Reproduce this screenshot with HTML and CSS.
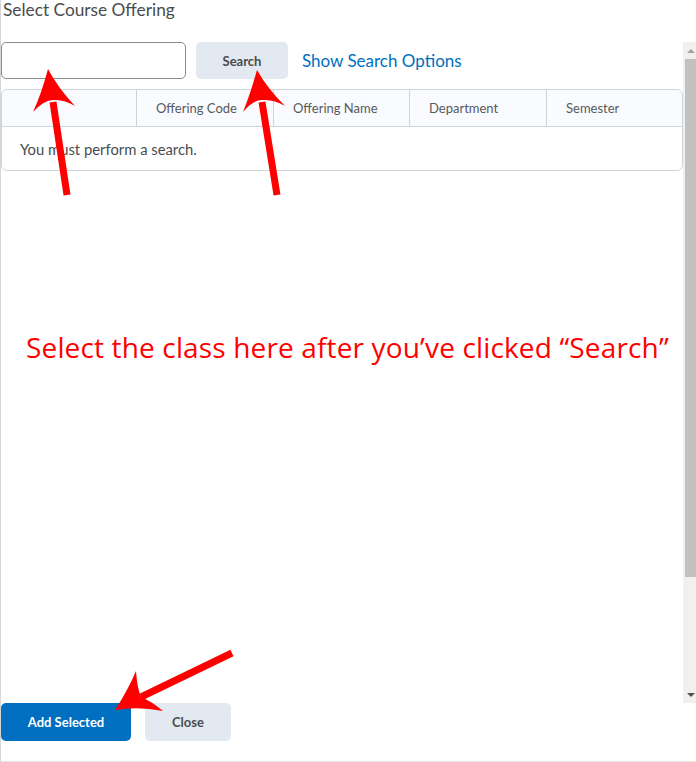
FILE: index.html
```html
<!DOCTYPE html>
<html lang="en">

<head>
    <meta charset="UTF-8">
    <meta name="viewport" content="width=device-width, initial-scale=1.0">
    <title>Select Course Offering</title>
    <link rel="stylesheet" href="styles.css">
</head>

<body>
    <div class="dialog">
        <h1 class="dialog-title">Select Course Offering</h1>

        <div class="dialog-body">
            <div class="dialog-content">
                <!-- Search bar -->
                <div class="search-row">
                    <input type="text" class="search-input" aria-label="Search">
                    <button class="btn btn-secondary btn-search">Search</button>
                    <a href="#" class="search-options">Show Search Options</a>
                </div>

                <!-- Results -->
                <table class="results">
                    <thead>
                        <tr>
                            <th class="col-select"></th>
                            <th class="col-code">Offering Code</th>
                            <th class="col-name">Offering Name</th>
                            <th class="col-dept">Department</th>
                            <th class="col-term">Semester</th>
                        </tr>
                    </thead>
                    <tbody>
                        <tr>
                            <td colspan="5">You must perform a search.</td>
                        </tr>
                    </tbody>
                </table>
            </div>

            <div class="scrollbar">
                <span class="scroll-arrow up"></span>
                <span class="scroll-thumb"></span>
                <span class="scroll-arrow down"></span>
            </div>
        </div>

        <div class="dialog-footer">
            <button class="btn btn-primary">Add Selected</button>
            <button class="btn btn-secondary btn-close">Close</button>
        </div>

        <!-- Annotations drawn over the screenshot -->
        <p class="note">Select the class here after you’ve clicked “Search”</p>
        <svg class="arrows" width="696" height="762" viewBox="0 0 696 762">
            <g fill="#ff0000" stroke="#ff0000">
                <line x1="67" y1="195" x2="53" y2="102" stroke-width="7" />
                <path stroke="none" d="M48,69 Q41,95 33,112 Q44,100 53,100 Q64,99 75,106 Q58,88 48,69 Z" />

                <line x1="277" y1="195" x2="262" y2="102" stroke-width="7" />
                <path stroke="none" d="M257,70 Q250,95 243,112 Q253,100 262,100 Q274,99 285,106 Q267,88 257,70 Z" />

                <line x1="232" y1="653" x2="141" y2="697" stroke-width="7" />
                <path stroke="none" d="M115,710 Q128,690 136,671 Q137,687 141,697 Q151,701 163,711 Q138,706 115,710 Z" />
            </g>
        </svg>
    </div>
</body>

</html>
```

FILE: styles.css
```css
* {
    margin: 0;
    padding: 0;
    box-sizing: border-box;
}

body {
    font-family: 'Lato', sans-serif;
    background-color: #fff;
    color: #494c4e;
}

/* Dialog */
.dialog {
    position: relative;
    width: 696px;
    height: 762px;
    border-left: 1px solid #d6d6d6;
    display: flex;
    flex-direction: column;
}

.dialog-title {
    height: 42px;
    padding-left: 2px;
    font-size: 17.3px;
    font-weight: 400;
    line-height: 20px;
    color: #494c4e;
}

.dialog-body {
    display: flex;
    height: 661px;
}

.dialog-content {
    flex: 1;
}

/* Search row */
.search-row {
    display: flex;
    align-items: center;
    height: 37px;
}

.search-input {
    width: 185px;
    height: 37px;
    border: 1px solid #868c8f;
    border-radius: 5px;
    margin-right: 10px;
}

.btn {
    height: 38px;
    border: none;
    border-radius: 5px;
    font-family: 'Lato', sans-serif;
    font-size: 13px;
    font-weight: 700;
    color: #494c4e;
}

.btn-secondary {
    background-color: #e3e9f1;
}

.btn-primary {
    width: 130px;
    background-color: #006fbf;
    color: #fff;
}

.btn-search {
    width: 92px;
    height: 37px;
    margin-right: 14px;
}

.search-options {
    font-size: 17px;
    color: #006fbf;
    text-decoration: none;
}

/* Results table */
.results {
    width: 682px;
    margin-top: 10px;
    table-layout: fixed;
    border-collapse: separate;
    border-spacing: 0;
    border: 1px solid #cdd5dc;
    border-radius: 6px;
}

.results th {
    height: 37px;
    padding: 0 19px;
    text-align: left;
    font-size: 13px;
    font-weight: 400;
    color: #565a5c;
    background-color: #f9fbff;
    border-bottom: 1px solid #cdd5dc;
    border-left: 1px solid #cdd5dc;
}

.results .col-select {
    width: 134px;
    border-left: none;
    border-top-left-radius: 6px;
}

.results .col-code,
.results .col-dept {
    width: 137px;
}

.results .col-name {
    width: 136px;
}

.results .col-term {
    width: 136px;
    border-top-right-radius: 6px;
}

.results td {
    height: 43px;
    padding: 0 18px;
    font-size: 14.8px;
    color: #494c4e;
}

/* Fake scrollbar */
.scrollbar {
    width: 13px;
    background-color: #f0f0f0;
    display: flex;
    flex-direction: column;
    align-items: flex-end;
}

.scroll-arrow {
    width: 11px;
    height: 17px;
    display: flex;
    justify-content: center;
    align-items: center;
}

.scroll-arrow::before {
    content: "";
    border-left: 4px solid transparent;
    border-right: 4px solid transparent;
}

.scroll-arrow.up::before {
    border-bottom: 4px solid #a3a3a3;
}

.scroll-arrow.down {
    margin-top: auto;
}

.scroll-arrow.down::before {
    border-top: 4px solid #505050;
}

.scroll-thumb {
    width: 11px;
    height: 518px;
    background-color: #c1c1c1;
}

/* Footer */
.dialog-footer {
    display: flex;
    gap: 14px;
    height: 59px;
    border-bottom: 1px solid #e6e6e6;
}

.btn-close {
    width: 86px;
}

/* Annotations */
.note {
    position: absolute;
    left: 25px;
    top: 328px;
    font-family: 'Open Sans', sans-serif;
    font-size: 28px;
    letter-spacing: 0.15px;
    color: #ff0000;
    white-space: nowrap;
}

.arrows {
    position: absolute;
    top: 0;
    left: -1px;
    pointer-events: none;
}
```
